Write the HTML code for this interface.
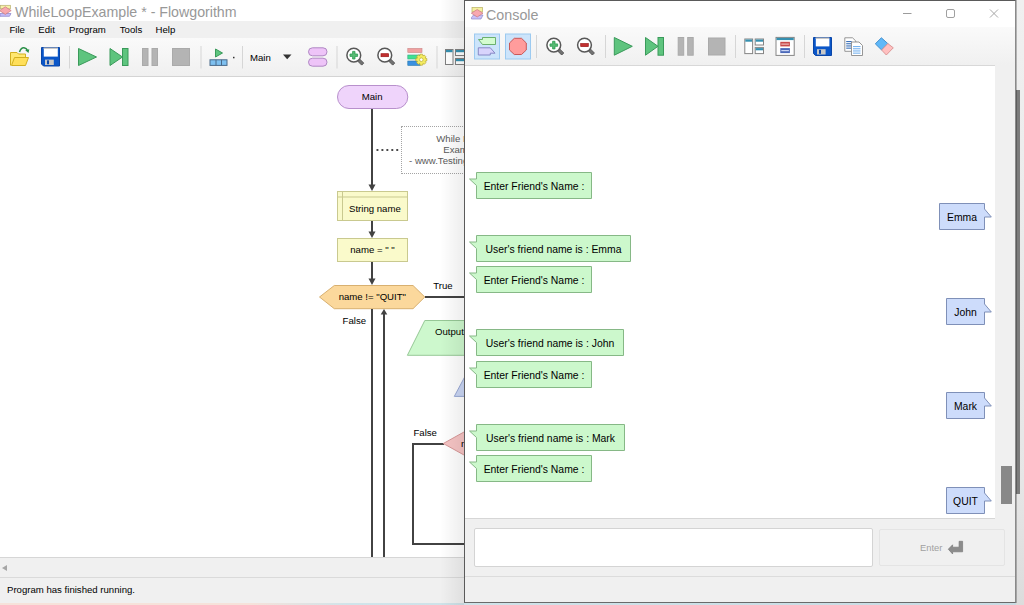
<!DOCTYPE html>
<html><head><meta charset="utf-8">
<style>
*{margin:0;padding:0;box-sizing:border-box}
html,body{width:1024px;height:605px;overflow:hidden;background:#f0f0f0;font-family:"Liberation Sans",sans-serif;position:relative}
.a{position:absolute}
.t{position:absolute;white-space:pre;line-height:1;color:#000}
</style></head><body>
<!-- MAIN WINDOW -->
<div class="a" style="left:0;top:0;width:1024px;height:21px;background:#fff"></div>
<div class="a" style="left:0;top:21.3px;width:1024px;height:16.3px;background:#f0f0f0"></div>
<div class="a" style="left:0;top:37.6px;width:1024px;height:38.4px;background:linear-gradient(#fafafa,#f0f0f0)"></div>
<div class="a" style="left:0;top:76px;width:1024px;height:1px;background:#d4d4d4"></div>
<div class="a" style="left:0;top:77px;width:1024px;height:480px;background:#fff"></div>
<div class="a" style="left:0;top:557px;width:1024px;height:1px;background:#d6d6d6"></div>
<div class="a" style="left:0;top:558px;width:1024px;height:19px;background:#f0f0f0"></div>
<div class="a" style="left:0;top:577px;width:1024px;height:1px;background:#dadada"></div>
<div class="a" style="left:0;top:578px;width:1024px;height:25px;background:#f0f0f0"></div>
<div class="a" style="left:0;top:603px;width:1024px;height:2px;background:linear-gradient(90deg,#f6e2da 0,#f6e2da 250px,#d0e4ea 350px,#c8dce4 100%)"></div>

<div class="t" style="left:15px;top:4.7px;font-size:14.2px;color:#989898">WhileLoopExample * - Flowgorithm</div>
<div class="t" style="left:9.4px;top:25px;font-size:9.6px">File</div>
<div class="t" style="left:38.3px;top:25px;font-size:9.6px">Edit</div>
<div class="t" style="left:69px;top:25px;font-size:9.6px">Program</div>
<div class="t" style="left:119.8px;top:25px;font-size:9.6px">Tools</div>
<div class="t" style="left:155.5px;top:25px;font-size:9.6px">Help</div>

<div class="t" style="left:7px;top:584.8px;font-size:9.6px">Program has finished running.</div>
<svg class="a" style="left:0;top:560px" width="10" height="14"><path d="M2 8 L7 5 V11 Z" fill="#a6a6a6"/></svg>


<!-- MAIN TOOLBAR ICONS -->
<svg class="a" style="left:0;top:0" width="464" height="77">
 <!-- folder -->
 <path d="M10.5 65.5 V52.5 H17 L18.5 54 H25.5 V57.5" fill="#ffe870" stroke="#d2b020" stroke-width="1"/>
 <path d="M11.5 65.5 L14.5 57.5 H28.5 L25.5 65.5 Z" fill="#ffdf5a" stroke="#d2b020" stroke-width="1"/>
 <path d="M19.5 52 Q21 47.5 24 47.8 Q26.5 48 27.5 50.5" fill="none" stroke="#2a9048" stroke-width="1.6"/>
 <path d="M25.2 50.2 L29.3 49.2 L28.5 53 Z" fill="#2a9048"/>
 <!-- save -->
 <path d="M41.5 47.5 H59.5 V66 H43.5 L41.5 64 Z" fill="#0a56c8" stroke="#0a46a8" stroke-width="1"/>
 <rect x="43.5" y="47.5" width="14.5" height="1.6" fill="#c8c8c8"/>
 <rect x="43.8" y="49" width="14" height="7.6" fill="#fff"/>
 <rect x="45" y="59.6" width="8.8" height="5.4" fill="#c8c8c8"/>
 <rect x="47" y="60.3" width="2" height="4" fill="#0a46a8"/>
 <rect x="69" y="46" width="1" height="22.5" fill="#d6d6d6"/>
 <!-- play -->
 <path d="M78.5 48.5 L96.5 57 L78.5 65.5 Z" fill="#5ec47e" stroke="#3a9a5a" stroke-width="1"/>
 <path d="M110 48.5 L122.5 57 L110 65.5 Z" fill="#5ec47e" stroke="#3a9a5a" stroke-width="1"/>
 <rect x="122.5" y="48.5" width="5.5" height="17" fill="#5ec47e" stroke="#3a9a5a" stroke-width="1"/>
 <!-- pause -->
 <rect x="142.5" y="48.5" width="5.5" height="17" fill="#b4b4b4" stroke="#aaa" stroke-width="1"/>
 <rect x="152" y="48.5" width="5.5" height="17" fill="#b4b4b4" stroke="#aaa" stroke-width="1"/>
 <rect x="172.5" y="48.5" width="17" height="17" fill="#b4b4b4" stroke="#aaa" stroke-width="1"/>
 <rect x="200.5" y="46" width="1" height="22.5" fill="#d6d6d6"/>
 <!-- run speed -->
 <path d="M215.5 49 L222.5 53 L215.5 57 Z" fill="#5ec47e" stroke="#3a9a5a" stroke-width="1"/>
 <rect x="210" y="59.8" width="17" height="5.6" fill="#7ec0f0" stroke="#4a6a8a" stroke-width="1"/>
 <rect x="215.5" y="59.8" width="1" height="5.6" fill="#4a6a8a"/>
 <rect x="221" y="59.8" width="1" height="5.6" fill="#4a6a8a"/>
 <rect x="233" y="56.8" width="1.5" height="1.5" fill="#333"/>
 <rect x="242" y="46" width="1" height="22.5" fill="#d6d6d6"/>
 <path d="M283 54.6 H291.5 L287.2 59.2 Z" fill="#333"/>
 <!-- pink pills -->
 <rect x="308.5" y="47.8" width="18.5" height="8" rx="4" fill="#eec4f8" stroke="#b088c4" stroke-width="1"/>
 <rect x="308.5" y="58.2" width="18.5" height="8" rx="4" fill="#eec4f8" stroke="#b088c4" stroke-width="1"/>
 <rect x="336.5" y="46" width="1" height="22.5" fill="#d6d6d6"/>
 <!-- zoom in -->
 <g transform="translate(353.8 55.2)">
  <path d="M3.8 5.8 L5.8 3.8 L9.9 7.9 L7.9 9.9 Z" fill="#727272" stroke="#565656" stroke-width="1"/>
  <circle r="6.9" fill="#fff" stroke="#585858" stroke-width="1.5"/>
  <path d="M-1.2 -3.8 H1.2 V-1.2 H3.8 V1.2 H1.2 V3.8 H-1.2 V1.2 H-3.8 V-1.2 H-1.2 Z" fill="#56bc74" stroke="#2e9a50" stroke-width=".8"/>
 </g>
 <g transform="translate(384.8 55.2)">
  <path d="M3.8 5.8 L5.8 3.8 L9.9 7.9 L7.9 9.9 Z" fill="#727272" stroke="#565656" stroke-width="1"/>
  <circle r="6.9" fill="#fff" stroke="#585858" stroke-width="1.5"/>
  <rect x="-3.8" y="-1.5" width="7.6" height="3" fill="#c23030" stroke="#9a1818" stroke-width=".7"/>
 </g>
 <!-- layers -->
 <rect x="407.8" y="48.4" width="14.2" height="4.2" fill="#f0a0a0" stroke="#c88" stroke-width=".6"/>
 <rect x="407.8" y="55" width="12.5" height="4" fill="#40e090" stroke="#3a8" stroke-width=".6"/>
 <rect x="407.8" y="61" width="12.5" height="4.4" fill="#3a90e0" stroke="#27a" stroke-width=".6"/>
 <g transform="translate(421.3 59.7)">
  <path d="M-1.2 -5.5 H1.2 L1.6 -3.8 L3 -4.6 L4.6 -3 L3.8 -1.6 L5.5 -1.2 V1.2 L3.8 1.6 L4.6 3 L3 4.6 L1.6 3.8 L1.2 5.5 H-1.2 L-1.6 3.8 L-3 4.6 L-4.6 3 L-3.8 1.6 L-5.5 1.2 V-1.2 L-3.8 -1.6 L-4.6 -3 L-3 -4.6 L-1.6 -3.8 Z" fill="#f4ec60" stroke="#b8a830" stroke-width=".7"/>
  <circle r="1.8" fill="#fff" stroke="#b8a830" stroke-width=".7"/>
 </g>
 <rect x="436.5" y="46" width="1" height="22.5" fill="#d6d6d6"/>
 <!-- layout partial -->
 <rect x="445.5" y="49.5" width="7.5" height="15" fill="#fff" stroke="#808080" stroke-width="1"/>
 <rect x="446" y="50" width="6.5" height="2.2" fill="#3590b0"/>
 <rect x="455.5" y="49.5" width="9" height="6" fill="#fff" stroke="#808080" stroke-width="1"/>
 <rect x="456" y="50" width="8" height="2.2" fill="#3590b0"/>
 <rect x="455.5" y="58.5" width="9" height="6" fill="#fff" stroke="#808080" stroke-width="1"/>
 <rect x="456" y="59" width="8" height="2.2" fill="#3590b0"/>
 <!-- title icon -->
 <rect x="0.5" y="5.3" width="10" height="3.5" fill="#f6f2a8" stroke="#b8b070" stroke-width=".7"/>
 <path d="M0 13.5 H11 L9.5 16.3 H0 Z" fill="#c4bcfa" stroke="#8a82c8" stroke-width=".7"/>
 <path d="M5.3 6.8 L11.2 10.6 L5.3 14.4 L-0.5 10.6 Z" fill="#f8a8ae" stroke="#c87880" stroke-width=".7"/>
</svg>
<div class="t" style="left:250px;top:52.7px;font-size:9.6px">Main</div>

<div class="a" style="left:401px;top:126px;width:118px;height:48px;border:1px dotted #a4a4a4"></div>
<!-- FLOWCHART -->
<svg class="a" style="left:0;top:0" width="1024" height="605" font-family="Liberation Sans" font-size="9.6">
 <defs><linearGradient id="shd" x1="0" x2="1"><stop offset="0" stop-color="#000" stop-opacity="0"/><stop offset="1" stop-color="#000" stop-opacity="0.07"/></linearGradient></defs>
 <!-- main terminal -->
 <rect x="337.5" y="85.5" width="70.3" height="23" rx="11.5" fill="#efd4fb" stroke="#b890cc" stroke-width="1"/>
 <text x="372.1" y="99.9" text-anchor="middle">Main</text>
 <line x1="372" y1="109" x2="372" y2="186" stroke="#424242" stroke-width="2"/>
 <path d="M368.5 184.5 H375.5 L372 191 Z" fill="#424242"/>
 <!-- comment -->
 <path d="M376.5 150 H400" stroke="#484848" stroke-width="1.9" stroke-dasharray="1.9 3.05"/>
 <g fill="#5a5a5a" text-anchor="middle">
  <text x="460.3" y="142.2">While Loop</text>
  <text x="462" y="153">Example</text>
  <text x="460" y="163.9">- www.TestingDocs.com</text>
 </g>
 <!-- declare -->
 <rect x="337.5" y="191.5" width="70" height="29" fill="#fafacb" stroke="#c9c98f" stroke-width="1"/>
 <line x1="337.5" y1="197" x2="407.5" y2="197" stroke="#c9c98f" stroke-width="1"/>
 <line x1="342.5" y1="191.5" x2="342.5" y2="220.5" stroke="#c9c98f" stroke-width="1"/>
 <text x="349" y="212.2">String name</text>
 <line x1="372" y1="221" x2="372" y2="233" stroke="#424242" stroke-width="2"/>
 <path d="M368.5 231.5 H375.5 L372 238 Z" fill="#424242"/>
 <!-- assign -->
 <rect x="337.5" y="238.5" width="70" height="23" fill="#fafacb" stroke="#c9c98f" stroke-width="1"/>
 <text x="372.5" y="253.2" text-anchor="middle">name = " "</text>
 <line x1="372" y1="262" x2="372" y2="280" stroke="#424242" stroke-width="2"/>
 <path d="M368.5 278.5 H375.5 L372 285 Z" fill="#424242"/>
 <!-- while -->
 <path d="M319.5 297 L334.3 285.5 H413 L424.8 297 L413 308.7 H334.3 Z" fill="#fbd89c" stroke="#d8b070" stroke-width="1"/>
 <text x="372.3" y="299.9" text-anchor="middle">name != "QUIT"</text>
 <line x1="425" y1="297" x2="470" y2="297" stroke="#424242" stroke-width="2"/>
 <text x="433.3" y="288.7">True</text>
 <text x="342.6" y="323.8">False</text>
 <line x1="372" y1="309" x2="372" y2="557" stroke="#424242" stroke-width="2"/>
 <line x1="384" y1="313" x2="384" y2="557" stroke="#424242" stroke-width="2"/>
 <path d="M380.7 314.5 H387.3 L384 309 Z" fill="#424242"/>
 <!-- output -->
 <path d="M424.8 320.5 H480 V355.3 H407.4 Z" fill="#cdf8cd" stroke="#96c896" stroke-width="1"/>
 <text x="435" y="335.2">Output</text>
 <!-- input -->
 <path d="M473 361.4 H490 V396.4 H454.3 Z" fill="#cad6f4" stroke="#98a8d4" stroke-width="1"/>
 <!-- if -->
 <text x="413.5" y="435.8">False</text>
 <path d="M444 444 H413 V544 H470" fill="none" stroke="#424242" stroke-width="2"/>
 <path d="M443.3 443.5 L485 420.3 L526.7 443.5 L485 466.7 Z" fill="#f6c4c4" stroke="#d89898" stroke-width="1"/>
 <text x="461" y="447" fill="#000">n</text>
 <!-- window shadow -->
 <rect x="440" y="0" width="24" height="605" fill="url(#shd)"/>
</svg>


<!-- CONSOLE WINDOW -->
<div class="a" style="left:464px;top:0;width:552px;height:603px;background:#f0f0f0;border:1px solid #5a5a5a;border-right-color:#8a8a8a;border-bottom-color:#6a6a6a"></div>
<div class="a" style="left:465px;top:1px;width:550px;height:26px;background:#fff"></div>
<div class="a" style="left:465px;top:27px;width:550px;height:38px;background:linear-gradient(#fafafa,#f0f0f0)"></div>
<div class="a" style="left:465px;top:65px;width:530px;height:1px;background:#d8d8d8"></div>
<div class="a" style="left:465px;top:66px;width:530px;height:453px;background:#fff;border-bottom:1px solid #d6d6d6"></div>

<!-- CONSOLE TOOLBAR -->
<svg class="a" style="left:0;top:0" width="1024" height="66">
 <!-- title icon -->
 <rect x="472" y="7.5" width="10.5" height="4.5" fill="#f4f0a0" stroke="#b8b060" stroke-width=".7"/>
 <path d="M471.5 17.5 L473.5 15 H483 L481 19 H471.5 Z" fill="#c8c0f8" stroke="#9088c8" stroke-width=".7"/>
 <path d="M477.2 9.5 L483 13.2 L477.2 17 L471.3 13.2 Z" fill="#f8a8b0" stroke="#c87880" stroke-width=".7"/>
 <!-- window buttons -->
 <rect x="903" y="13" width="8.5" height="1" fill="#9c9c9c"/>
 <rect x="946.5" y="9.5" width="8" height="8" rx="1.5" fill="none" stroke="#a0a0a0" stroke-width="1"/>
 <path d="M990 9.5 L998 17.5 M998 9.5 L990 17.5" stroke="#9c9c9c" stroke-width="0.9"/>
 <!-- btn1 -->
 <rect x="474.5" y="34" width="25" height="25" fill="#cce4fb" stroke="#9ccaf0" stroke-width="1"/>
 <path d="M482.5 37.5 H495.5 V44.5 H482.5 L478.5 39.5 H482.5 Z" fill="#d4fcd0" stroke="#60a860" stroke-width=".9" stroke-linejoin="round"/>
 <path d="M478.3 47.8 H490.3 L495 53.2 H490.3 V55 H478.3 Z" fill="#d8d4fc" stroke="#8080c0" stroke-width=".9" stroke-linejoin="round"/>
 <!-- btn2 -->
 <rect x="505.5" y="34" width="25" height="25" fill="#cce4fb" stroke="#9ccaf0" stroke-width="1"/>
 <path d="M514.3 38.3 H521.5 L526.3 43 V50 L521.5 54.5 H514.3 L509.5 50 V43 Z" fill="#ff9c9c" stroke="#c85858" stroke-width="1"/>
 <rect x="536" y="35" width="1" height="23" fill="#d6d6d6"/>
 <!-- zoom in -->
 <g transform="translate(553.8 45.1)">
  <path d="M3.8 5.8 L5.8 3.8 L9.9 7.9 L7.9 9.9 Z" fill="#727272" stroke="#565656" stroke-width="1"/>
  <circle r="6.9" fill="#fff" stroke="#585858" stroke-width="1.5"/>
  <path d="M-1.2 -3.8 H1.2 V-1.2 H3.8 V1.2 H1.2 V3.8 H-1.2 V1.2 H-3.8 V-1.2 H-1.2 Z" fill="#56bc74" stroke="#2e9a50" stroke-width=".8"/>
 </g>
 <g transform="translate(584.5 45.1)">
  <path d="M3.8 5.8 L5.8 3.8 L9.9 7.9 L7.9 9.9 Z" fill="#727272" stroke="#565656" stroke-width="1"/>
  <circle r="6.9" fill="#fff" stroke="#585858" stroke-width="1.5"/>
  <rect x="-3.8" y="-1.5" width="7.6" height="3" fill="#c23030" stroke="#9a1818" stroke-width=".7"/>
 </g>
 <rect x="605" y="35" width="1" height="23" fill="#d6d6d6"/>
 <!-- play -->
 <path d="M614.3 37.5 L632.3 46.3 L614.3 55.2 Z" fill="#5ec47e" stroke="#3a9a5a" stroke-width="1"/>
 <path d="M645.5 37.5 L658 46.3 L645.5 55.2 Z" fill="#5ec47e" stroke="#3a9a5a" stroke-width="1"/>
 <rect x="658" y="37.5" width="5.5" height="17.7" fill="#5ec47e" stroke="#3a9a5a" stroke-width="1"/>
 <rect x="678.2" y="37.5" width="5.5" height="17.7" fill="#b4b4b4" stroke="#aaa" stroke-width="1"/>
 <rect x="687.7" y="37.5" width="5.5" height="17.7" fill="#b4b4b4" stroke="#aaa" stroke-width="1"/>
 <rect x="708.5" y="38" width="16.5" height="17" fill="#b4b4b4" stroke="#aaa" stroke-width="1"/>
 <rect x="735" y="35" width="1" height="23" fill="#d6d6d6"/>
 <!-- layout1 -->
 <rect x="744.8" y="39" width="7.8" height="14.6" fill="#fff" stroke="#858585" stroke-width="1"/>
 <rect x="745.3" y="39.5" width="6.8" height="2.2" fill="#3590b0"/>
 <rect x="755.2" y="39" width="8.3" height="6" fill="#fff" stroke="#858585" stroke-width="1"/>
 <rect x="755.7" y="39.5" width="7.3" height="2.2" fill="#3590b0"/>
 <rect x="755.2" y="47.6" width="8.3" height="6" fill="#fff" stroke="#858585" stroke-width="1"/>
 <rect x="755.7" y="48.1" width="7.3" height="2.2" fill="#3590b0"/>
 <!-- layout2 -->
 <rect x="776" y="37.4" width="18.2" height="18" fill="#fff" stroke="#858585" stroke-width="1"/>
 <rect x="776.5" y="37.9" width="17.2" height="2.2" fill="#3590b0"/>
 <rect x="780.3" y="41.8" width="9.6" height="4.6" fill="#c84a4a"/>
 <rect x="781.3" y="43.6" width="7.6" height="1" fill="#f4d0d0"/>
 <rect x="780.3" y="48.1" width="9.6" height="5" fill="#4a68b8"/>
 <rect x="781.3" y="50" width="7.6" height="1.2" fill="#c8d4f4"/>
 <rect x="804" y="35" width="1" height="23" fill="#d6d6d6"/>
 <!-- save -->
 <path d="M813.5 37.5 H831.5 V55.5 H815.5 L813.5 53.5 Z" fill="#0a56c8" stroke="#0a46a8" stroke-width="1"/>
 <rect x="815.5" y="37.5" width="14" height="1.5" fill="#c8c8c8"/>
 <rect x="815.8" y="39" width="13.6" height="7.4" fill="#fff"/>
 <rect x="817" y="49.2" width="8.6" height="5.3" fill="#c8c8c8"/>
 <rect x="819" y="49.8" width="2" height="4" fill="#0a46a8"/>
 <!-- copy -->
 <path d="M844.8 37.8 H852.5 L855.8 41 V51.3 H844.8 Z" fill="#fff" stroke="#8a8a8a" stroke-width=".9"/>
 <rect x="846.2" y="41" width="5.5" height="1.1" fill="#3a70b8"/><rect x="846.2" y="43.2" width="5.5" height="1.1" fill="#3a70b8"/><rect x="846.2" y="45.4" width="5.5" height="1.1" fill="#3a70b8"/><rect x="846.2" y="47.6" width="5.5" height="1.1" fill="#3a70b8"/>
 <path d="M851.5 42 H859 L862.5 45.5 V55.5 H851.5 Z" fill="#fff" stroke="#8a8a8a" stroke-width=".9"/>
 <rect x="853" y="46" width="7.5" height="1.1" fill="#78b4f0"/><rect x="853" y="48.2" width="7.5" height="1.1" fill="#78b4f0"/><rect x="853" y="50.4" width="7.5" height="1.1" fill="#78b4f0"/><rect x="853" y="52.6" width="7.5" height="1.1" fill="#78b4f0"/>
 <!-- eraser -->
 <path d="M881.4 37.8 L887.8 43.6 L881.6 50 L875.3 43.8 Z" fill="#60b8f8" stroke="#3a88c8" stroke-width=".9"/>
 <path d="M887.8 43.6 L893.3 47.8 L886.3 55 L881.6 50 Z" fill="#ffc0c0" stroke="#d89090" stroke-width=".9"/>
</svg>
<div class="t" style="left:486px;top:8.3px;font-size:14.3px;color:#989898">Console</div>
<svg class="a" style="left:0;top:0" width="1024" height="605" font-family="Liberation Sans" font-size="10.4">
 <path d="M476.5 179.0 V172.5 H591.5 V198.5 H476.5 V185.5 L469.5 179.0 Z" fill="#ccf8cc" stroke="#86b886" stroke-width="1"/>
 <text x="534.00" y="189.60" text-anchor="middle">Enter Friend&#39;s Name :</text>
 <path d="M939.5 203.5 H984.5 V209.0 L991.3 217.0 H984.5 V229.5 H939.5 Z" fill="#cddcfb" stroke="#7f90b8" stroke-width="1"/>
 <text x="962.00" y="220.60" text-anchor="middle">Emma</text>
 <path d="M476.5 242.0 V235.5 H630.5 V261.5 H476.5 V248.5 L469.5 242.0 Z" fill="#ccf8cc" stroke="#86b886" stroke-width="1"/>
 <text x="553.50" y="252.60" text-anchor="middle">User&#39;s friend name is : Emma</text>
 <path d="M476.5 273.0 V266.5 H591.5 V292.5 H476.5 V279.5 L469.5 273.0 Z" fill="#ccf8cc" stroke="#86b886" stroke-width="1"/>
 <text x="534.00" y="283.60" text-anchor="middle">Enter Friend&#39;s Name :</text>
 <path d="M946.5 298.5 H984.5 V304.0 L991.3 312.0 H984.5 V324.5 H946.5 Z" fill="#cddcfb" stroke="#7f90b8" stroke-width="1"/>
 <text x="965.50" y="315.60" text-anchor="middle">John</text>
 <path d="M476.5 336.0 V329.5 H623.5 V355.5 H476.5 V342.5 L469.5 336.0 Z" fill="#ccf8cc" stroke="#86b886" stroke-width="1"/>
 <text x="550.00" y="346.60" text-anchor="middle">User&#39;s friend name is : John</text>
 <path d="M476.5 368.0 V361.5 H591.5 V387.5 H476.5 V374.5 L469.5 368.0 Z" fill="#ccf8cc" stroke="#86b886" stroke-width="1"/>
 <text x="534.00" y="378.60" text-anchor="middle">Enter Friend&#39;s Name :</text>
 <path d="M946.5 392.5 H984.5 V398.0 L991.3 406.0 H984.5 V418.5 H946.5 Z" fill="#cddcfb" stroke="#7f90b8" stroke-width="1"/>
 <text x="965.50" y="409.60" text-anchor="middle">Mark</text>
 <path d="M476.5 431.0 V424.5 H624.5 V450.5 H476.5 V437.5 L469.5 431.0 Z" fill="#ccf8cc" stroke="#86b886" stroke-width="1"/>
 <text x="550.50" y="441.60" text-anchor="middle">User&#39;s friend name is : Mark</text>
 <path d="M476.5 462.0 V455.5 H591.5 V481.5 H476.5 V468.5 L469.5 462.0 Z" fill="#ccf8cc" stroke="#86b886" stroke-width="1"/>
 <text x="534.00" y="472.60" text-anchor="middle">Enter Friend&#39;s Name :</text>
 <path d="M946.5 487.5 H984.5 V493.0 L991.3 501.0 H984.5 V513.5 H946.5 Z" fill="#cddcfb" stroke="#7f90b8" stroke-width="1"/>
 <text x="965.50" y="504.60" text-anchor="middle">QUIT</text>
</svg>
<!-- console scrollbar -->
<div class="a" style="left:1001px;top:466px;width:11px;height:38px;background:#888"></div>
<!-- behind main window right scrollbar -->
<div class="a" style="left:1016px;top:0;width:8px;height:605px;background:linear-gradient(#f0f0f0,#e6e6e6 80%,#dcdcdc)"></div>
<div class="a" style="left:1016px;top:90px;width:4px;height:404px;background:#7c7c7c"></div>
<div class="a" style="left:1016px;top:0;width:1px;height:603px;background:rgba(0,0,0,0.25)"></div>
<!-- bottom panel -->
<div class="a" style="left:474px;top:528px;width:399px;height:39px;background:#fff;border:1px solid #d4d4d4;border-radius:2px"></div>
<div class="a" style="left:879px;top:529px;width:126px;height:37px;border:1px solid #e4e4e4;border-radius:2px"></div>
<div class="t" style="left:920px;top:543px;font-size:9.4px;color:#a0a0a0">Enter</div>
<svg class="a" style="left:946px;top:539px" width="20" height="18"><path d="M2.3 10.2 L6.6 5.8 V8.2 H13.1 V2.3 H16.6 V12.8 H6.6 V15 Z" fill="#8c8c8c" stroke="#7a7a7a" stroke-width=".7" stroke-linejoin="round"/></svg>
<div class="a" style="left:465px;top:576px;width:550px;height:1px;background:#dcdcdc"></div>


</body></html>
